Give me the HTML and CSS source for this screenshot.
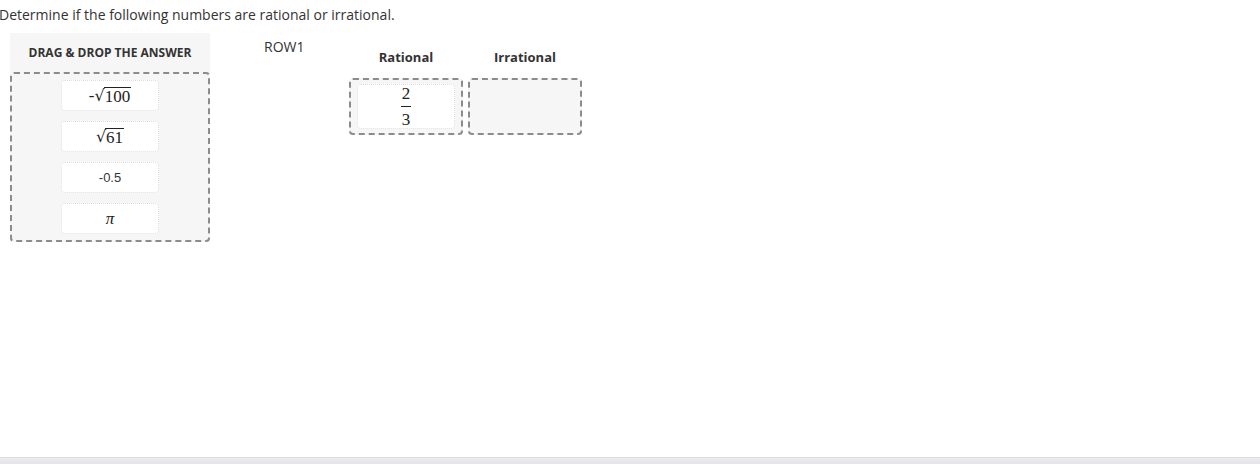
FILE: index.html
```html
<!DOCTYPE html>
<html lang="en">

<head>
    <meta charset="UTF-8" />
    <meta name="viewport" content="width=device-width, initial-scale=1.0" />
    <title>Rational or Irrational</title>
    <link rel="stylesheet" href="styles.css">
</head>

<body>

    <p class="question">Determine if the following numbers are rational or irrational.</p>

    <div class="workspace">

        <div class="answers">
            <h3>DRAG &amp; DROP THE ANSWER</h3>
            <div class="pool">
                <div class="chip math">-<span class="radical">√</span><span class="radicand">100</span></div>
                <div class="chip math"><span class="radical">√</span><span class="radicand">61</span></div>
                <div class="chip plain">-0.5</div>
                <div class="chip math"><i>π</i></div>
            </div>
        </div>

        <div class="board">
            <div class="row-label">ROW1</div>
            <div class="col-head">Rational</div>
            <div class="col-head">Irrational</div>

            <div></div>
            <div class="drop">
                <div class="chip math frac-chip">
                    <span class="frac">
                        <span class="num">2</span>
                        <span class="den">3</span>
                    </span>
                </div>
            </div>
            <div class="drop"></div>
        </div>

    </div>

    <footer class="bottom-bar"></footer>

</body>

</html>
```

FILE: styles.css
```css
:root {
    --text: #333;
    --panel: #f6f6f6;
    --dash: #8c8c8c;
    --chip-line: #dedede;
}

* {
    margin: 0;
    padding: 0;
    box-sizing: border-box;
}

html,
body {
    height: 100%;
}

body {
    font-family: 'Open Sans', sans-serif;
    color: var(--text);
    background: #fff;
    position: relative;
    overflow: hidden;
}

.question {
    font-size: 14px;
    line-height: 20px;
    padding-top: 5px;
    margin-left: -1px;
}

.workspace {
    display: flex;
    align-items: flex-start;
    padding-left: 10px;
    margin-top: 8px;
}

/* answer pool */

.answers {
    width: 200px;
    background: var(--panel);
}

.answers h3 {
    font-size: 12px;
    font-weight: 700;
    text-align: center;
    height: 39px;
    line-height: 39px;
}

.pool {
    border: 2px dashed var(--dash);
    border-radius: 4px;
    height: 170px;
    padding-top: 6px;
    display: flex;
    flex-direction: column;
    align-items: center;
    gap: 10px;
}

.chip {
    width: 98px;
    height: 31px;
    background: #fff;
    border: 1px dotted var(--chip-line);
    border-radius: 4px;
    display: flex;
    align-items: center;
    justify-content: center;
}

.math {
    font-family: 'Liberation Serif', 'DejaVu Serif', serif;
    font-size: 17px;
    color: #222;
}

.math i {
    font-size: 17px;
}

.plain {
    font-family: 'Liberation Sans', Arial, sans-serif;
    font-size: 13px;
}

.radical {
    font-family: 'DejaVu Serif', serif;
    font-size: 16px;
    margin-right: -1px;
}

.radicand {
    border-top: 1px solid #222;
    padding: 0 1px;
    line-height: 17px;
}

/* board */

.board {
    margin-left: 54px;
    display: grid;
    grid-template-columns: 80px 114px 114px;
    column-gap: 5px;
}

.row-label {
    font-size: 14px;
    line-height: 18px;
    margin-top: 5px;
}

.col-head {
    font-size: 13px;
    font-weight: 700;
    text-align: center;
    height: 45px;
    padding-top: 15px;
    line-height: 18px;
}

.drop {
    height: 57px;
    border: 2px dashed var(--dash);
    border-radius: 4px;
    background: var(--panel);
    padding: 4px 6px;
}

.frac-chip {
    height: 45px;
}

.frac {
    display: flex;
    flex-direction: column;
    align-items: center;
    font-size: 17px;
    line-height: 16px;
}

.frac .num {
    border-bottom: 1px solid #222;
    padding: 0 1px 4px;
}

.frac .den {
    padding-top: 5px;
}

.bottom-bar {
    position: absolute;
    left: 0;
    right: 0;
    bottom: 0;
    height: 7px;
    background: linear-gradient(#ececf0, #e4e4e8);
    border-top: 1px solid #dcdcdc;
}
```
